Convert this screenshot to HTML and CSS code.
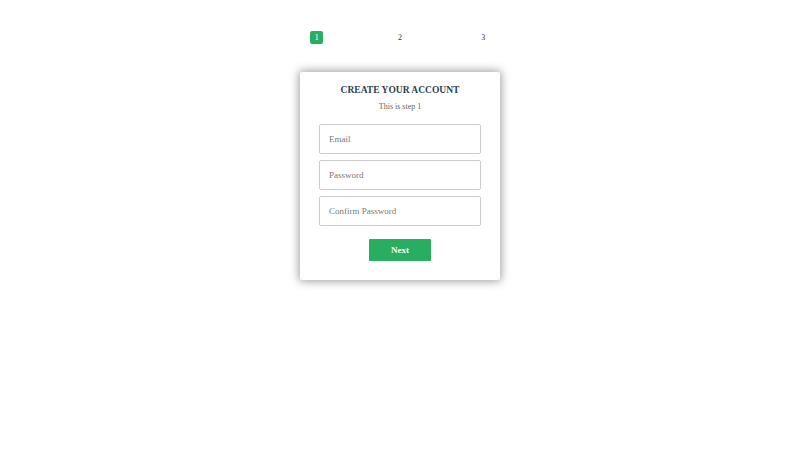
FILE: index.html
```html
<!DOCTYPE html>
<html lang="en">
<head>
    <meta charset="UTF-8">
    <meta name="viewport" content="width=device-width, initial-scale=1.0">
    <title>Create Your Account</title>
    <link rel="stylesheet" href="styles.css">
</head>
<body>
    <form id="msform">
        <!-- progress steps -->
        <ul class="progressbar">
            <li class="active"><span>1</span></li>
            <li><span>2</span></li>
            <li><span>3</span></li>
        </ul>
        <div class="step">
            <h2 class="title">CREATE YOUR ACCOUNT</h2>
            <h3 class="subtitle">This is step 1</h3>
            <input type="text" name="email" placeholder="Email">
            <input type="password" name="pass" placeholder="Password">
            <input type="password" name="cpass" placeholder="Confirm Password">
            <button type="button" class="next">Next</button>
        </div>
    </form>
</body>
</html>
```

FILE: styles.css
```css
html, body {
    min-height: 100%;
}
body {
    font-family: "Liberation Serif", "Times New Roman", serif;
    background-color: #fff;
    margin: 0;
    padding: 0;
    height: 450px;
}
#msform {
    width: 250px;
    margin: 0 auto;
    padding: 31px 0 40px;
}
.progressbar {
    list-style: none;
    display: flex;
    margin: 0 0 28px;
    padding: 0;
}
.progressbar li {
    flex: 1;
    display: flex;
    justify-content: center;
    font-size: 8px;
    color: #333;
}
.progressbar li span {
    width: 13px;
    height: 13px;
    line-height: 13px;
    text-align: center;
    border-radius: 2px;
}
.progressbar li.active span {
    background: #27ae60;
    color: #fff;
}
.step {
    width: 200px;
    box-sizing: border-box;
    margin: 0 auto;
    padding: 13px 19px 19px;
    border-radius: 2px;
    background: #fff;
    box-shadow: 0 0 10px 1px rgba(0, 0, 0, 0.4);
    display: flex;
    flex-direction: column;
    align-items: center;
}
.title {
    font-size: 9.5px;
    font-weight: bold;
    color: #2c3e50;
    margin: 0 0 7px;
}
.subtitle {
    font-size: 8px;
    font-weight: normal;
    color: #666;
    margin: 0 0 13px;
}
.step input {
    width: 100%;
    height: 30px;
    box-sizing: border-box;
    padding: 0 9px;
    margin: 0 0 6px;
    border: 1px solid #ccc;
    border-radius: 2px;
    font-family: inherit;
    font-size: 9px;
    color: #2c3e50;
}
.step input::placeholder {
    color: #777;
}
.next {
    width: 62px;
    height: 22px;
    margin-top: 7px;
    background: #27ae60;
    color: #fff;
    border: 0;
    border-radius: 1px;
    font-family: inherit;
    font-weight: bold;
    font-size: 9px;
    cursor: pointer;
}
```
